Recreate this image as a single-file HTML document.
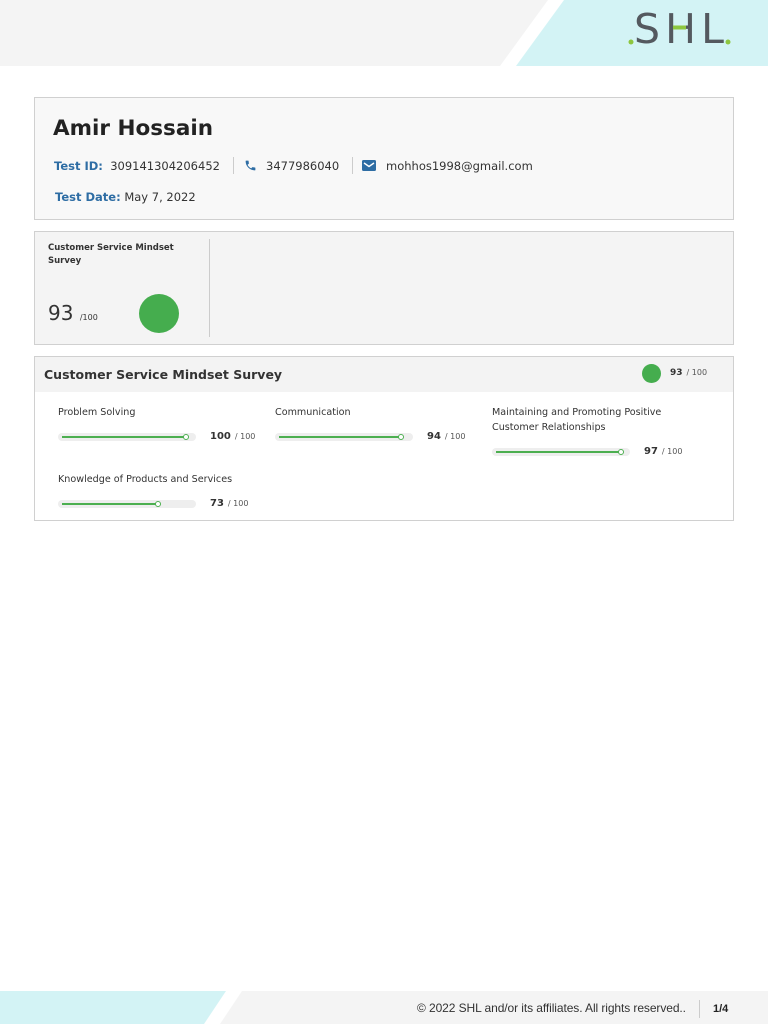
<!DOCTYPE html>
<html><head><style>
*{margin:0;padding:0;box-sizing:border-box}
body{width:768px;height:1024px;background:#fff;font-family:"DejaVu Sans","Liberation Sans",sans-serif;color:#333;position:relative;overflow:hidden}
.abs{position:absolute}
.card{position:absolute;left:34px;width:700px;border:1px solid #d0d0d0}
.lbl{color:#2e6da4;font-weight:bold}
.track{position:absolute;height:8px;width:138px;background:#eeeeee;border-radius:4px}
.fill{position:absolute;left:4px;top:3px;height:2px;background:#4caf50}
.dot{position:absolute;top:1px;width:6px;height:6px;border:1.5px solid #4caf50;border-radius:50%;background:#fff}
.sc{position:absolute;font-size:10px;font-weight:bold;color:#333}
.sc span{font-weight:normal;font-size:8px;color:#555;margin-left:4px}
.nm{position:absolute;font-size:9.6px;color:#333;line-height:15px}
</style></head><body>
<svg class="abs" style="left:0;top:0" width="768" height="66">
<rect width="768" height="66" fill="#f4f4f4"/>
<polygon points="500,66 548,0 768,0 768,66" fill="#fff"/>
<polygon points="516,66 564,0 768,0 768,66" fill="#d3f3f5"/>
<text x="634" y="43" font-family="DejaVu Sans,sans-serif" font-size="41" fill="#54595f" textLength="90" lengthAdjust="spacing">SHL</text>
<circle cx="631" cy="42" r="2.5" fill="#8dc63f"/><circle cx="728" cy="42" r="2.5" fill="#8dc63f"/>
<rect x="673" y="25.5" width="13" height="4" fill="#8dc63f"/>
</svg>

<div class="card" style="top:97px;height:123px;background:#f8f8f8">
<div class="abs" style="left:18px;top:18px;font-size:21.5px;font-weight:bold;color:#222">Amir Hossain</div>
<div class="abs" style="left:19px;top:61px;font-size:11.5px;white-space:nowrap"><span class="lbl">Test ID:</span>&nbsp; 309141304206452</div>
<div class="abs" style="left:198px;top:59px;width:1px;height:17px;background:#ccc"></div>
<svg class="abs" style="left:209px;top:61px" width="13" height="13" viewBox="0 0 24 24"><path fill="#2e6da4" d="M6.6 10.8c1.4 2.8 3.8 5.1 6.6 6.6l2.2-2.2c.3-.3.7-.4 1-.2 1.1.4 2.300.6 3.6.6.6 0 1 .4 1 1V20c0 .6-.4 1-1 1C10.6 21 3 13.4 3 4c0-.6.4-1 1-1h3.5c.6 0 1 .4 1 1 0 1.3.2 2.5.6 3.6.1.3 0 .7-.2 1z"/></svg>
<div class="abs" style="left:231px;top:61px;font-size:11.5px">3477986040</div>
<div class="abs" style="left:317px;top:59px;width:1px;height:17px;background:#ccc"></div>
<svg class="abs" style="left:327px;top:62px" width="14" height="11" viewBox="0 0 14 11"><rect width="14" height="11" rx="1.5" fill="#2e6da4"/><path d="M2 3l5 3.5L12 3" stroke="#fff" stroke-width="1.4" fill="none"/></svg>
<div class="abs" style="left:351px;top:61px;font-size:11.5px">mohhos1998@gmail.com</div>
<div class="abs" style="left:20px;top:92px;font-size:11.5px"><span class="lbl">Test Date:</span> May 7, 2022</div>
</div>

<div class="card" style="top:231px;height:114px;background:#f4f4f4">
<div class="abs" style="left:13px;top:10px;font-size:8.5px;font-weight:bold;line-height:13px;width:135px">Customer Service Mindset Survey</div>
<div class="abs" style="left:13px;top:69px;font-size:20px;color:#333">93 <span style="font-size:8px">/100</span></div>
<div class="abs" style="left:104px;top:62px;width:40px;height:39px;border-radius:50%;background:#45ad4e"></div>
<div class="abs" style="left:174px;top:7px;width:1px;height:98px;background:#ccc"></div>
</div>

<div class="card" style="top:356px;height:165px;background:#fff">
<div class="abs" style="left:0;top:0;width:698px;height:35px;background:#f3f3f3"></div>
<div class="abs" style="left:9px;top:10px;font-size:12.5px;font-weight:bold;color:#333">Customer Service Mindset Survey</div>
<div class="abs" style="left:607px;top:7px;width:19px;height:19px;border-radius:50%;background:#45ad4e"></div>
<div class="sc" style="left:635px;top:11px;font-size:9px">93<span>/ 100</span></div>
</div>

<div class="nm" style="left:58px;top:405px">Problem Solving</div>
<div class="track" style="left:58px;top:433px"><div class="fill" style="width:126px"></div><div class="dot" style="left:125px"></div></div>
<div class="sc" style="left:210px;top:431px">100<span>/ 100</span></div>

<div class="nm" style="left:275px;top:405px">Communication</div>
<div class="track" style="left:275px;top:433px"><div class="fill" style="width:122px"></div><div class="dot" style="left:123px"></div></div>
<div class="sc" style="left:427px;top:431px">94<span>/ 100</span></div>

<div class="nm" style="left:492px;top:405px">Maintaining and Promoting Positive<br>Customer Relationships</div>
<div class="track" style="left:492px;top:448px"><div class="fill" style="width:126px"></div><div class="dot" style="left:126px"></div></div>
<div class="sc" style="left:644px;top:446px">97<span>/ 100</span></div>

<div class="nm" style="left:58px;top:472px">Knowledge of Products and Services</div>
<div class="track" style="left:58px;top:500px"><div class="fill" style="width:96px"></div><div class="dot" style="left:97px"></div></div>
<div class="sc" style="left:210px;top:498px">73<span>/ 100</span></div>

<svg class="abs" style="left:0;top:991px" width="768" height="33">
<rect width="768" height="33" fill="#f4f4f4"/>
<polygon points="0,0 242,0 220,33 0,33" fill="#fff"/>
<polygon points="0,0 226,0 204,33 0,33" fill="#d3f3f5"/>
<text x="686" y="21" text-anchor="end" font-family="Liberation Sans,sans-serif" font-size="12" fill="#333" textLength="269">© 2022 SHL and/or its affiliates. All rights reserved..</text>
<rect x="699" y="9" width="1" height="18" fill="#ccc"/>
<text x="713" y="21" font-family="Liberation Sans,sans-serif" font-size="11" font-weight="bold" fill="#222">1/4</text>
</svg>
</body></html>
